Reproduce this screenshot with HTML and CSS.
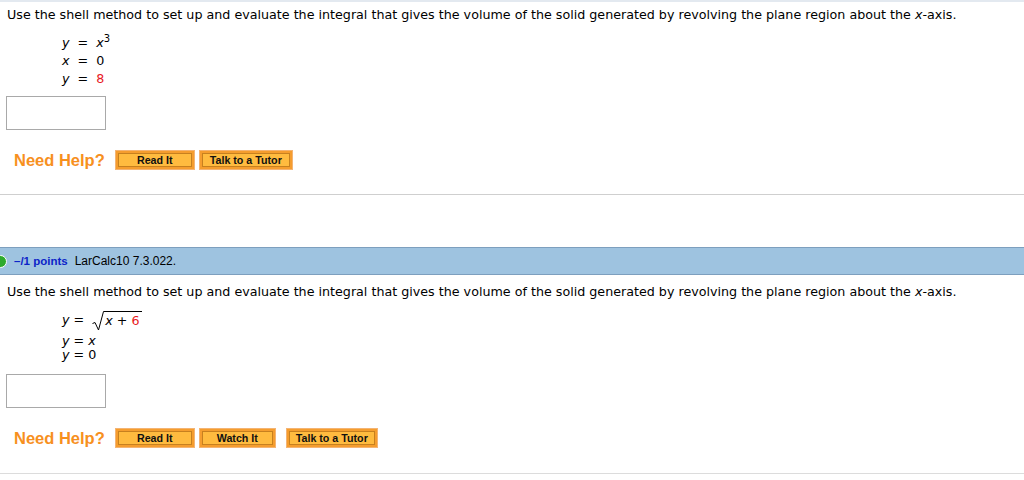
FILE: index.html
```html
<!DOCTYPE html>
<html>
<head>
<meta charset="utf-8">
<link rel="stylesheet" href="styles.css">
</head>
<body>
<div class="topline"></div>
<section class="question first">
  <p class="prompt">Use the shell method to set up and evaluate the integral that gives the volume of the solid generated by revolving the plane region about the <i>x</i>-axis.</p>
  <div class="eqs">
    <div class="eq"><i>y</i>&nbsp; = &nbsp;<i>x</i><sup>3</sup></div>
    <div class="eq"><i>x</i>&nbsp; = &nbsp;0</div>
    <div class="eq"><i>y</i>&nbsp; = &nbsp;<span class="red">8</span></div>
  </div>
  <div class="answer"></div>
  <div class="help">
    <span class="need">Need Help?</span>
    <span class="btn w80"><span class="in">Read It</span></span>
    <span class="btn w94"><span class="in">Talk to a Tutor</span></span>
  </div>
</section>
<div class="sep"></div>
<div class="bar">
  <span class="dot"></span>
  <span class="pts">–/1 points</span>
  <span class="ref">LarCalc10 7.3.022.</span>
</div>
<section class="question second">
  <p class="prompt">Use the shell method to set up and evaluate the integral that gives the volume of the solid generated by revolving the plane region about the <i>x</i>-axis.</p>
  <div class="eqs">
    <div class="eq tall"><i>y</i> = <svg class="rad" width="12" height="20" viewBox="0 0 12 20"><path d="M0.5 12.5 L3 11.5 L6.5 19 L11.5 0.5 L12 0.5" fill="none" stroke="#000" stroke-width="1"/></svg><span class="under"><i>x</i> + <span class="red">6</span></span></div>
    <div class="eq tight"><i>y</i> = <i>x</i></div>
    <div class="eq tight"><i>y</i> = 0</div>
  </div>
  <div class="answer a2"></div>
  <div class="help">
    <span class="need">Need Help?</span>
    <span class="btn w80"><span class="in">Read It</span></span>
    <span class="btn w77"><span class="in">Watch It</span></span>
    <span class="btn w92 gap"><span class="in">Talk to a Tutor</span></span>
  </div>
</section>
<div class="sep light"></div>
</body>
</html>
```
FILE: styles.css
```css
html, body { margin: 0; padding: 0; background: #fff; }
body { font-family: "DejaVu Sans", Verdana, sans-serif; font-size: 12.7px; color: #000; width: 1024px; height: 480px; overflow: hidden; }
.topline { height: 2px; background: #e3e9f0; }
.question { padding: 0 0 0 7px; }
.prompt { margin: 0; line-height: 16px; padding-top: 5px; }
.eqs { padding-left: 55px; margin-top: 11px; }
.eq { line-height: 18px; height: 18px; }
.eq sup { font-size: 10px; line-height: 0; vertical-align: 5px; }
.red { color: #e8191e; }
.answer { width: 98px; height: 32px; border: 1px solid #a9a9a9; margin: 8px 0 0 -1px; }
.help { display: flex; align-items: center; margin-top: 20px; padding-left: 7px; }
.need { font-family: "Liberation Sans", Arial, sans-serif; font-weight: bold; font-size: 16.5px; color: #f7901e; margin-right: 10px; }
.btn { display: flex; box-sizing: border-box; height: 20px; padding: 2px; background: #f59d2e; border: 1px solid #f4b473; margin-right: 4px; }
.btn .in { flex: 1; display: flex; align-items: center; justify-content: center; background: #ffbb3f; border: 1px solid #c7801f; font-family: "Liberation Sans", Arial, sans-serif; font-weight: bold; font-size: 10.7px; color: #111; }
.w80 { width: 80px; } .w94 { width: 94px; } .w77 { width: 77px; } .w92 { width: 92px; }
.gap { margin-left: 6px; }
.sep { height: 1px; background: #cfcfcf; margin-top: 24px; }
.bar { margin-top: 52px; height: 26px; background: #9ec3e0; border-top: 1px solid #7d9fbe; border-bottom: 1px solid #7d9fbe; display: flex; align-items: center; position: relative; font-family: "Liberation Sans", Arial, sans-serif; font-size: 12px; }
.dot { position: absolute; left: -6px; top: 7px; width: 11px; height: 11px; border-radius: 50%; background: #2eaa2e; border: 1px solid #fff; }
.pts { color: #0c24c8; font-weight: bold; margin-left: 14px; font-size: 11.5px; }
.ref { margin-left: 7px; color: #000; }
.second .prompt { padding-top: 9px; }
.second .eqs { margin-top: 9px; }
.eq.tall { height: 22px; line-height: 22px; margin-bottom: 3px; display: flex; align-items: center; white-space: pre; }
.eq.tight { height: 14px; line-height: 14px; }
.rad { margin-left: 4px; align-self: center; margin-top: 1px; }
.under { border-top: 1px solid #000; padding: 1px 2px 0 1px; line-height: 15px; margin-top: -2px; }
.answer.a2 { margin-top: 12px; }
.sep.light { background: #dcdcdc; margin-top: 25px; }
```
